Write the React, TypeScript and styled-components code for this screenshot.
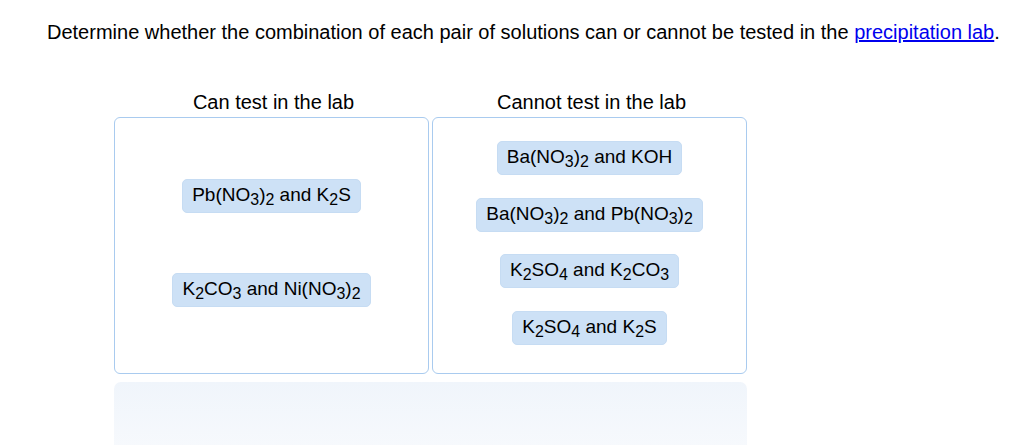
import React from "react";
import styled, { createGlobalStyle } from "styled-components";

const Global = createGlobalStyle`
  html, body { margin: 0; padding: 0; background: #ffffff; }
  body { font-family: "Liberation Sans", Arial, sans-serif; color: #000; }
`;

const Page = styled.div`
  width: 1024px;
  height: 445px;
  overflow: hidden;
  padding: 20px 0 0 47px;
  box-sizing: border-box;
`;

const Prompt = styled.p`
  margin: 0;
  font-size: 20px;
  line-height: 24px;
`;

const Link = styled.a`
  color: #0000ee;
  text-decoration: underline;
`;

const Board = styled.div`
  margin: 46px 0 0 67px;
  width: 633px;
  display: flex;
  flex-direction: column;
`;

const Columns = styled.div`
  display: grid;
  grid-template-columns: 315px 315px;
  column-gap: 3px;
`;

const Column = styled.div`
  display: flex;
  flex-direction: column;
  align-items: stretch;
`;

const ColumnTitle = styled.div`
  font-size: 20px;
  line-height: 24px;
  text-align: center;
  margin-bottom: 3px;
  padding-left: 4px;
`;

const DropZone = styled.div`
  height: 257px;
  box-sizing: border-box;
  border: 1px solid #a9cbef;
  border-radius: 6px;
  display: flex;
  flex-direction: column;
  align-items: center;
  justify-content: space-evenly;
  padding-bottom: 5px;
`;

const Chip = styled.div`
  font-size: 19px;
  line-height: 22px;
  padding: 4px 9px 6px;
  background: #cde1f6;
  border: 1px solid #c6dcf3;
  border-radius: 5px;
  white-space: nowrap;
`;

const Sub = styled.sub`
  font-size: 0.84em;
  line-height: 0;
  vertical-align: -0.25em;
`;

const Tray = styled.div`
  margin-top: 8px;
  height: 80px;
  border-radius: 7px;
  background: linear-gradient(to bottom, #f0f5fb, #f8fafd);
`;

type Part = string | { s: string };
const F = ({ parts }: { parts: Part[] }) => (
  <>
    {parts.map((p, i) =>
      typeof p === "string" ? <React.Fragment key={i}>{p}</React.Fragment> : <Sub key={i}>{p.s}</Sub>
    )}
  </>
);

const left: Part[][] = [
  ["Pb(NO", { s: "3" }, ")", { s: "2" }, " and K", { s: "2" }, "S"],
  ["K", { s: "2" }, "CO", { s: "3" }, " and Ni(NO", { s: "3" }, ")", { s: "2" }],
];

const right: Part[][] = [
  ["Ba(NO", { s: "3" }, ")", { s: "2" }, " and KOH"],
  ["Ba(NO", { s: "3" }, ")", { s: "2" }, " and Pb(NO", { s: "3" }, ")", { s: "2" }],
  ["K", { s: "2" }, "SO", { s: "4" }, " and K", { s: "2" }, "CO", { s: "3" }],
  ["K", { s: "2" }, "SO", { s: "4" }, " and K", { s: "2" }, "S"],
];

export default function App() {
  return (
    <>
      <Global />
      <Page>
        <Prompt>
          Determine whether the combination of each pair of solutions can or cannot be tested in the{" "}
          <Link href="#">precipitation lab</Link>.
        </Prompt>
        <Board>
          <Columns>
            <Column>
              <ColumnTitle>Can test in the lab</ColumnTitle>
              <DropZone>
                {left.map((p, i) => (
                  <Chip key={i}>
                    <F parts={p} />
                  </Chip>
                ))}
              </DropZone>
            </Column>
            <Column>
              <ColumnTitle>Cannot test in the lab</ColumnTitle>
              <DropZone>
                {right.map((p, i) => (
                  <Chip key={i}>
                    <F parts={p} />
                  </Chip>
                ))}
              </DropZone>
            </Column>
          </Columns>
          <Tray />
        </Board>
      </Page>
    </>
  );
}
